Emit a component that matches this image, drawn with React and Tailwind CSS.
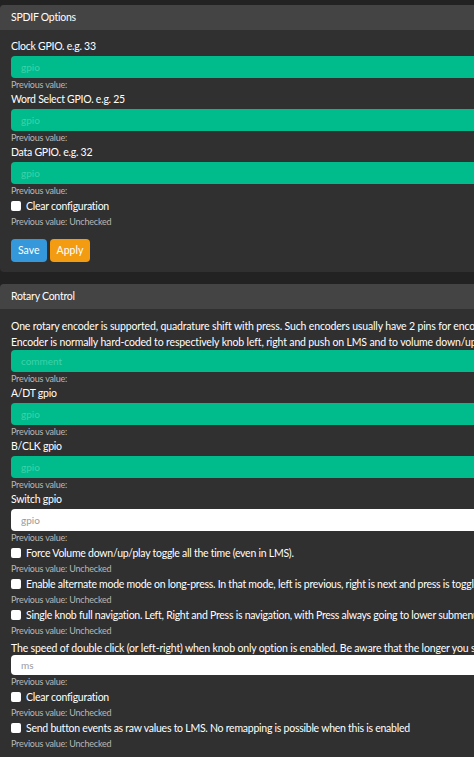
import React from 'react';

const font = { fontFamily: 'Lato, "Open Sans", sans-serif' };

function Prev({ text = 'Previous value:', lh = 'leading-[14px]' }) {
  return <div className={`text-[9px] ${lh} text-[#b8b8b8] tracking-[-0.2px] whitespace-nowrap`}>{text}</div>;
}

function Box({ placeholder, ok = true, h = 'h-[22px]' }) {
  return (
    <div className={`${h} rounded-[4px] pl-[10px] flex items-center text-[10px] ${ok ? 'bg-[#00bc8c] text-[#3fd1a9]' : 'bg-white text-[#9a9a9a]'}`}>
      {placeholder}
    </div>
  );
}

function Field({ label, placeholder, ok = true }) {
  return (
    <div>
      <div className="text-[10.5px] leading-[15px] tracking-[-0.25px] text-white mb-[2px] whitespace-nowrap">{label}</div>
      <Box placeholder={placeholder} ok={ok} />
      <Prev />
    </div>
  );
}

function Check({ label }) {
  return (
    <div>
      <div className="flex items-center h-[16px] gap-[5px]">
        <span className="w-[10px] h-[10px] rounded-[2px] bg-white shrink-0" />
        <span className="text-[10.5px] leading-[15px] tracking-[-0.25px] text-white whitespace-nowrap">{label}</span>
      </div>
      <Prev text="Previous value: Unchecked" lh="leading-[15px]" />
    </div>
  );
}

function Card({ title, children }) {
  return (
    <div className="w-[1100px] bg-[#303030] rounded-[4px] overflow-hidden">
      <div className="h-[25px] bg-[#444444] px-[11px] flex items-center text-[10.5px] tracking-[-0.25px] text-white">{title}</div>
      <div className="px-[11px]">{children}</div>
    </div>
  );
}

export default function App() {
  return (
    <div className="w-[474px] h-[757px] overflow-hidden bg-[#222222] pt-[5px]" style={font}>
      <Card title="SPDIF Options">
        <div className="pt-[9px]">
          <Field label="Clock GPIO. e.g. 33" placeholder="gpio" />
          <Field label="Word Select GPIO. e.g. 25" placeholder="gpio" />
          <Field label="Data GPIO. e.g. 32" placeholder="gpio" />
          <Check label="Clear configuration" />
          <div className="flex gap-[3px] mt-[10px] pb-[10px]">
            <button className="h-[23px] px-[7px] rounded-[4px] bg-[#3498db] text-white text-[10.5px]">Save</button>
            <button className="h-[23px] px-[7px] rounded-[4px] bg-[#f39c12] text-white text-[10.5px]">Apply</button>
          </div>
        </div>
      </Card>
      <div className="h-[12px]" />
      <Card title="Rotary Control">
        <div className="pt-[9px] pb-[10px]">
          <div className="text-[10.5px] leading-[16px] tracking-[-0.15px] text-white whitespace-nowrap">
            One rotary encoder is supported, quadrature shift with press. Such encoders usually have 2 pins for encoders (A and B), and common C that must be set to ground and an optional SW pin for press.
          </div>
          <div className="text-[10.5px] leading-[16px] tracking-[-0.15px] text-white whitespace-nowrap">
            Encoder is normally hard-coded to respectively knob left, right and push on LMS and to volume down/up/play toggle on BT and AirPlay.
          </div>
          <Box placeholder="comment" />
          <Prev />
          <Field label="A/DT gpio" placeholder="gpio" />
          <Field label="B/CLK gpio" placeholder="gpio" />
          <Field label="Switch gpio" placeholder="gpio" ok={false} />
          <Check label="Force Volume down/up/play toggle all the time (even in LMS)." />
          <Check label="Enable alternate mode mode on long-press. In that mode, left is previous, right is next and press is toggle. Every long press on knob toggles the mode." />
          <Check label="Single knob full navigation. Left, Right and Press is navigation, with Press always going to lower submenu item. Longpress is 'Back'." />
          <div className="mt-[3px]">
            <div className="text-[10.5px] leading-[14px] tracking-[-0.15px] text-white whitespace-nowrap">
              The speed of double click (or left-right) when knob only option is enabled. Be aware that the longer you set double click speed, the less responsive the interface will be.
            </div>
            <Box placeholder="ms" ok={false} h="h-[20px]" />
            <Prev />
          </div>
          <Check label="Clear configuration" />
          <Check label="Send button events as raw values to LMS. No remapping is possible when this is enabled" />
        </div>
      </Card>
    </div>
  );
}
